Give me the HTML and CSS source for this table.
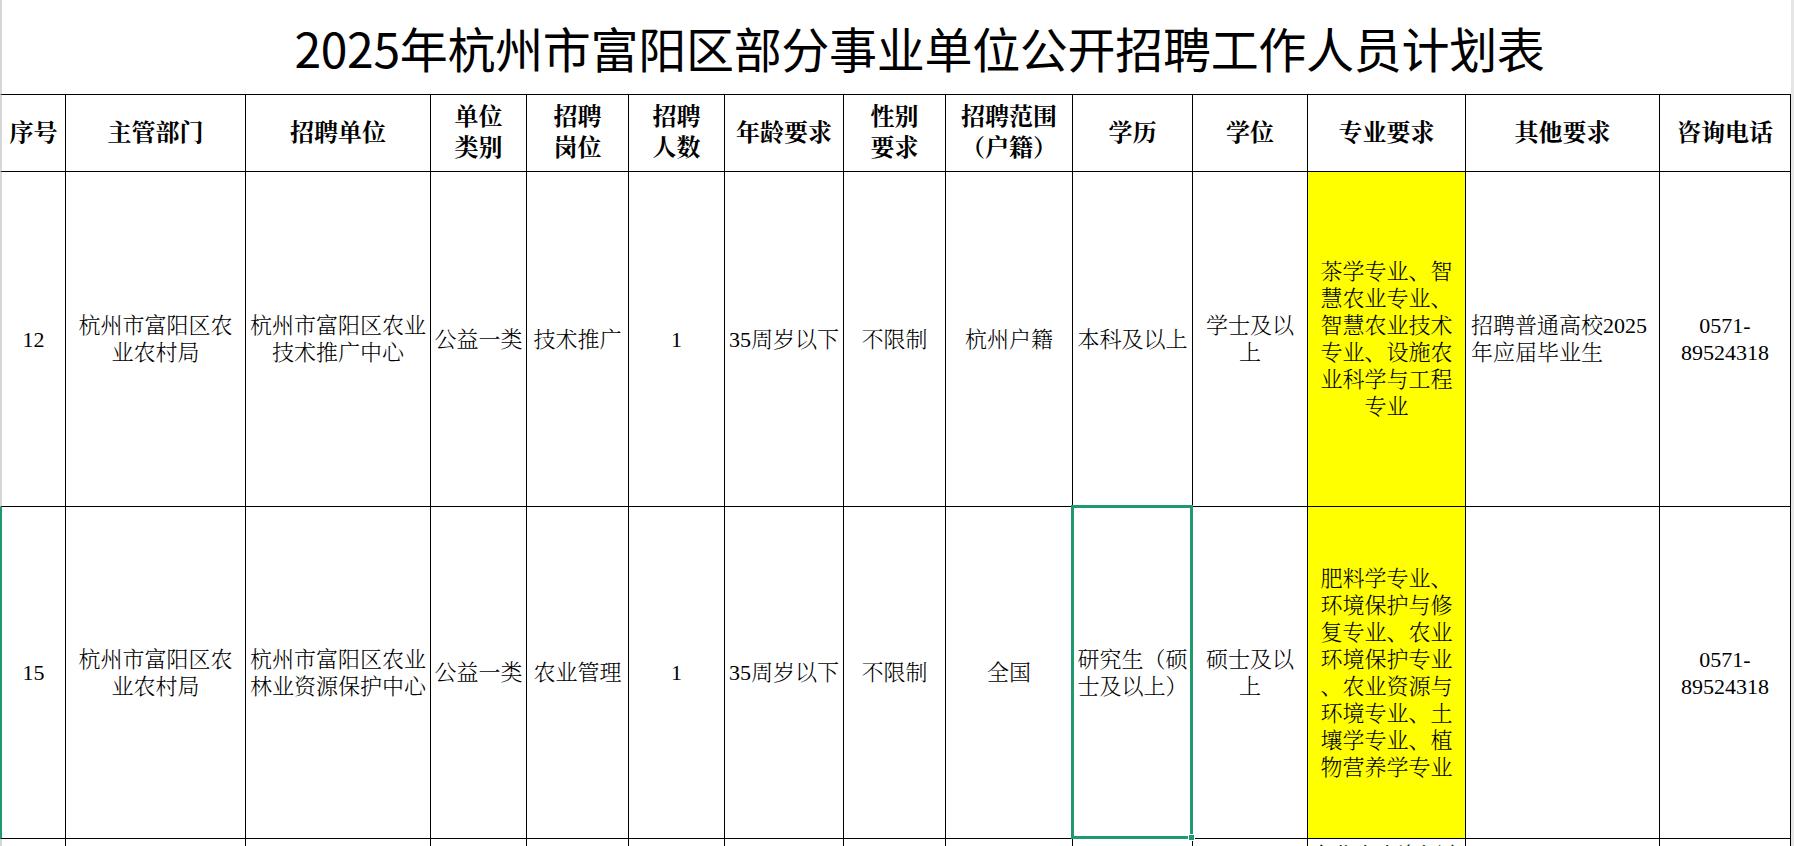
FILE: index.html
```html
<!DOCTYPE html>
<html lang="zh-CN">
<head>
<meta charset="utf-8">
<title>2025年杭州市富阳区部分事业单位公开招聘工作人员计划表</title>
<link rel="stylesheet" href="styles.css">
</head>
<body>
<div class="sheet">
  <div class="title">2025年杭州市富阳区部分事业单位公开招聘工作人员计划表</div>
  <table class="grid">
    <colgroup>
      <col class="w-seq"><col class="w-dept"><col class="w-unit"><col class="w-type"><col class="w-post"><col class="w-num"><col class="w-age"><col class="w-sex"><col class="w-area"><col class="w-edu"><col class="w-deg"><col class="w-major"><col class="w-other"><col class="w-tel">
    </colgroup>
    <tr class="head">
      <td class="first">序号</td>
      <td>主管部门</td>
      <td>招聘单位</td>
      <td>单位<br>类别</td>
      <td>招聘<br>岗位</td>
      <td>招聘<br>人数</td>
      <td>年龄要求</td>
      <td>性别<br>要求</td>
      <td>招聘范围<br>（户籍）</td>
      <td>学历</td>
      <td>学位</td>
      <td>专业要求</td>
      <td>其他要求</td>
      <td>咨询电话</td>
    </tr>
    <tr class="row-a">
      <td class="first">12</td>
      <td>杭州市富阳区农<br>业农村局</td>
      <td>杭州市富阳区农业<br>技术推广中心</td>
      <td>公益一类</td>
      <td>技术推广</td>
      <td>1</td>
      <td>35周岁以下</td>
      <td>不限制</td>
      <td>杭州户籍</td>
      <td>本科及以上</td>
      <td>学士及以<br>上</td>
      <td class="hl">茶学专业、智<br>慧农业专业、<br>智慧农业技术<br>专业、设施农<br>业科学与工程<br>专业</td>
      <td class="left">招聘普通高校2025<br>年应届毕业生</td>
      <td>0571-<br>89524318</td>
    </tr>
    <tr class="row-b">
      <td class="first selected-row">15</td>
      <td>杭州市富阳区农<br>业农村局</td>
      <td>杭州市富阳区农业<br>林业资源保护中心</td>
      <td>公益一类</td>
      <td>农业管理</td>
      <td>1</td>
      <td>35周岁以下</td>
      <td>不限制</td>
      <td>全国</td>
      <td class="active">研究生（硕<br>士及以上）<span class="sel-box"></span></td>
      <td>硕士及以<br>上</td>
      <td class="hl">肥料学专业、<br>环境保护与修<br>复专业、农业<br>环境保护专业<br>、农业资源与<br>环境专业、土<br>壤学专业、植<br>物营养学专业</td>
      <td class="left"></td>
      <td>0571-<br>89524318</td>
    </tr>
    <tr class="row-c">
      <td class="first"></td>
      <td></td>
      <td></td>
      <td></td>
      <td></td>
      <td></td>
      <td></td>
      <td></td>
      <td></td>
      <td></td>
      <td></td>
      <td class="top">农业水土资源专<br>业</td>
      <td></td>
      <td></td>
    </tr>
  </table>
</div>
</body>
</html>
```

FILE: styles.css
```css
html, body {
  margin: 0;
  padding: 0;
}

body {
  width: 1794px;
  height: 846px;
  overflow: hidden;
  background: #e6e6e6;
  font-family: "Liberation Serif", "Noto Serif CJK SC", "Noto Sans CJK SC", serif;
  color: #000;
}

.sheet {
  width: 1791px;
  height: 846px;
  background: #fff;
  overflow: hidden;
}

.title {
  height: 94px;
  box-sizing: border-box;
  border-left: 2px solid #d6d6d6;
  padding-left: 46px;
  display: flex;
  align-items: center;
  justify-content: center;
  font-family: "Noto Sans CJK SC", "Liberation Sans", sans-serif;
  font-size: 48px;
  font-weight: 400;
  line-height: 1;
  white-space: nowrap;
  letter-spacing: -0.3px;
}

.grid {
  width: 1791px;
  table-layout: fixed;
  border-collapse: separate;
  border-spacing: 0;
}

.w-seq { width: 66px; }
.w-dept { width: 180px; }
.w-unit { width: 185px; }
.w-type { width: 96px; }
.w-post { width: 102px; }
.w-num { width: 96px; }
.w-age { width: 119px; }
.w-sex { width: 102px; }
.w-area { width: 127px; }
.w-edu { width: 120px; }
.w-deg { width: 115px; }
.w-major { width: 158px; }
.w-other { width: 194px; }
.w-tel { width: 131px; }

.grid td {
  box-sizing: border-box;
  border-right: 1px solid #000;
  border-bottom: 1px solid #000;
  padding: 0 2px;
  text-align: center;
  vertical-align: middle;
  white-space: nowrap;
  overflow: visible;
  font-size: 22px;
  line-height: 27px;
  font-weight: 300;
}

.grid td.first {
  border-left: 2px solid #d6d6d6;
}

.grid td.first.selected-row {
  border-left-color: #1f9a6e;
}

.head {
  height: 78px;
}

.head td {
  border-top: 1px solid #000;
  font-size: 24px;
  line-height: 31px;
  font-weight: 700;
}

.row-a {
  height: 335px;
}

.row-b {
  height: 332px;
}

.row-c {
  height: 200px;
}

.grid td.hl {
  background: #ffff00;
}

.grid td.left {
  text-align: left;
  padding-left: 5px;
}

.grid td.top {
  vertical-align: top;
  padding-top: 3px;
}

.grid td.active {
  position: relative;
}

.sel-box {
  position: absolute;
  left: -2px;
  top: -2px;
  right: -1px;
  bottom: -1px;
  border: 3px solid #1f9a6e;
  pointer-events: none;
}

.sel-box::after {
  content: "";
  position: absolute;
  right: -5px;
  bottom: -5px;
  width: 5px;
  height: 5px;
  background: #1f9a6e;
  border: 1px solid #fff;
}
```
